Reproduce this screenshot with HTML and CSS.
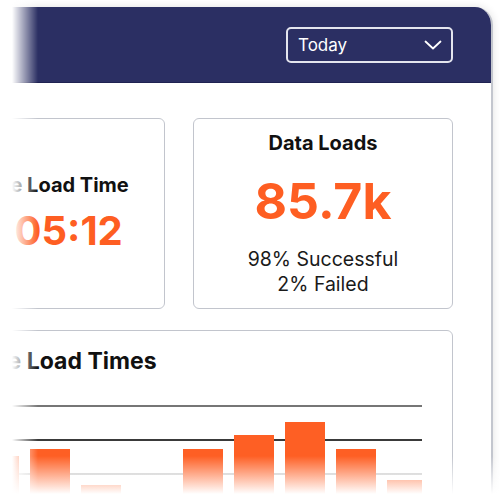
FILE: index.html
```html
<!DOCTYPE html>
<html lang="en">
<head>
  <meta charset="UTF-8">
  <title>Load Dashboard</title>
  <link rel="stylesheet" href="styles.css">
</head>
<body>
  <div class="stage">
    <div class="window">
      <header class="topbar">
        <div class="dropdown">
          <span>Today</span>
          <svg width="18" height="10" viewBox="0 0 18 10"><path d="M1.5 1.5 L9 8.5 L16.5 1.5" fill="none" stroke="#fff" stroke-width="1.8" stroke-linecap="round" stroke-linejoin="round"/></svg>
        </div>
      </header>

      <main class="content">
        <div class="stats">
          <div class="card card-center">
            <h2>Average Load Time</h2>
            <div class="value value-sm">00:05:12</div>
          </div>
          <div class="card">
            <h2>Data Loads</h2>
            <div class="value">85.7k</div>
            <p class="sub">98% Successful<br>2% Failed</p>
          </div>
        </div>

        <div class="card chart-card">
          <h3>Average Load Times</h3>
          <div class="chart">
            <div class="grid">
              <div class="line l1"></div>
              <div class="line l2"></div>
              <div class="line l3"></div>
              <div class="line l4"></div>
            </div>
            <div class="bars">
              <div class="bar" style="height: 69px"></div>
              <div class="bar" style="height: 76px"></div>
              <div class="bar" style="height: 40px"></div>
              <div class="bar" style="height: 22px"></div>
              <div class="bar" style="height: 76px"></div>
              <div class="bar" style="height: 90px"></div>
              <div class="bar" style="height: 103px"></div>
              <div class="bar" style="height: 76px"></div>
              <div class="bar" style="height: 45px"></div>
            </div>
          </div>
        </div>
      </main>
    </div>
    <div class="fade-left"></div>
    <div class="fade-bottom"></div>
  </div>
</body>
</html>
```

FILE: styles.css
```css
* {
  box-sizing: border-box;
}
body {
  margin: 0;
  background: #fff;
  font-family: 'Inter', 'Liberation Sans', sans-serif;
  color: #111;
}
.stage {
  position: relative;
  width: 500px;
  height: 500px;
  overflow: hidden;
  padding-top: 7px;
}
.window {
  width: 628px;
  height: 560px;
  margin-left: -135px;
  background: #fff;
  border-right: 2px solid #c3c6ce;
  border-radius: 0 18px 0 0;
  box-shadow: 0 0 9px rgba(0, 0, 0, 0.12);
  overflow: hidden;
}
.topbar {
  height: 76px;
  background: #2b2f63;
  border-bottom: 1px solid #1f2252;
  display: flex;
  justify-content: flex-end;
  align-items: center;
  padding-right: 38px;
  padding-top: 1px;
}
.dropdown {
  width: 167px;
  height: 36px;
  border: 2px solid #e4e5ee;
  border-radius: 5px;
  display: flex;
  align-items: center;
  justify-content: space-between;
  padding: 0 9px 0 10px;
  color: #fff;
  font-size: 17px;
}
.content {
  padding: 35px 38px 0 40px;
}
.stats {
  display: grid;
  grid-template-columns: 260px 260px;
  gap: 28px;
}
.card {
  border: 1px solid #c2c5cd;
  border-radius: 6px;
  background: #fff;
}
.stats .card {
  height: 191px;
  display: flex;
  flex-direction: column;
  align-items: center;
  text-align: center;
  padding-top: 12px;
}
.stats .card-center {
  justify-content: center;
  padding-top: 0;
}
h2 {
  margin: 0;
  font-size: 20px;
  line-height: 24px;
  font-weight: 700;
}
.value {
  margin-top: 16px;
  font-size: 50px;
  line-height: 60px;
  font-weight: 700;
  color: #fe5e22;
}
.value-sm {
  margin-top: 10px;
  font-size: 40px;
  line-height: 48px;
}
.sub {
  margin: 16px 0 0;
  font-size: 19.5px;
  line-height: 25px;
  color: #1a1a1a;
}
.chart-card {
  margin-top: 21px;
  height: 220px;
  padding: 16px 30px 0 22px;
}
h3 {
  margin: 0;
  font-size: 23px;
  line-height: 28px;
  font-weight: 700;
}
.chart {
  margin-top: 30px;
  margin-left: 4px;
  display: grid;
  grid-template-rows: 120px;
  height: 120px;
  overflow: hidden;
}
.grid, .bars {
  grid-area: 1 / 1;
}
.line {
  height: 34px;
  border-top: 2px solid #c2c2c2;
}
.l1 { border-top-color: #767676; }
.l2 { border-top-color: #3a3a3a; }
.bars {
  display: flex;
  align-items: flex-end;
  gap: 11px;
  padding-left: 47px;
}
.bar {
  flex: 0 0 40px;
  background: #fe5f24;
}
.fade-left {
  position: absolute;
  top: 0;
  left: 0;
  width: 40px;
  height: 100%;
  background: linear-gradient(to right, #fff 12px, rgba(255, 255, 255, 0) 38px);
}
.fade-bottom {
  position: absolute;
  left: 0;
  bottom: 0;
  width: 100%;
  height: 44px;
  background: linear-gradient(to bottom, rgba(255, 255, 255, 0), #fff 38px);
}
```
